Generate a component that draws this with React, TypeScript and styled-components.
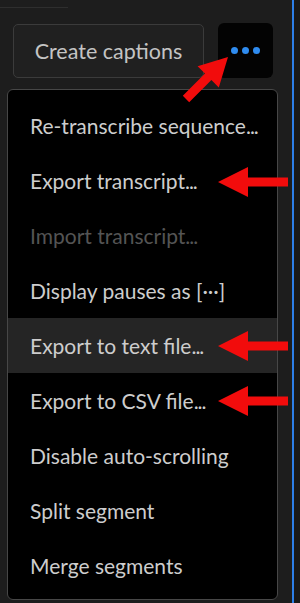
import React from "react";
import styled, { createGlobalStyle } from "styled-components";

const GlobalStyle = createGlobalStyle`
  html, body {
    margin: 0;
    padding: 0;
    background: #1d1d1d;
  }
  * { box-sizing: border-box; }
`;

const Page = styled.div`
  position: relative;
  width: 300px;
  height: 603px;
  overflow: hidden;
  display: flex;
  background: #1d1d1d;
  font-family: "Lato", "Open Sans", sans-serif;
`;

const Panel = styled.div`
  width: 294px;
  height: 100%;
  border-right: 2px solid #2d7fe8;
  display: flex;
  flex-direction: column;
`;

const Gutter = styled.div`
  flex: 1;
  background: #191919;
`;

const TopRule = styled.div`
  width: 68px;
  height: 1px;
  margin-top: 7px;
  background: #2e2e2e;
`;

const Toolbar = styled.div`
  display: flex;
  align-items: center;
  gap: 14px;
  margin-top: 15px;
  padding-left: 13px;
`;

const CaptionButton = styled.button`
  width: 191px;
  height: 54px;
  border: 1px solid #3b3b3b;
  border-radius: 5px;
  background: #202020;
  color: #c4c4c4;
  font-family: inherit;
  font-size: 21.5px;
  font-weight: 400;
  padding: 0;
  display: flex;
  align-items: center;
  justify-content: center;
`;

const MoreButton = styled.button`
  width: 55px;
  height: 55px;
  border: none;
  border-radius: 6px;
  background: #030303;
  padding: 0;
  display: flex;
  align-items: center;
  justify-content: center;
  gap: 3.7px;
`;

const Dot = styled.span`
  width: 7px;
  height: 7px;
  border-radius: 50%;
  background: #2f8cf0;
`;

const Menu = styled.div`
  margin: 11px 0 0 7px;
  width: 271px;
  border: 1px solid #474747;
  border-radius: 6px;
  background: #000;
  padding: 8px 0 6px;
  display: flex;
  flex-direction: column;
`;

const Item = styled.div<{ $disabled?: boolean; $active?: boolean }>`
  height: 55px;
  display: flex;
  align-items: center;
  padding-left: 22px;
  font-size: 21px;
  font-weight: 400;
  white-space: nowrap;
  color: ${(p) => (p.$disabled ? "#545454" : "#cdcdcd")};
  background: ${(p) => (p.$active ? "#252525" : "transparent")};
`;

const Ellipsis = styled.span`
  letter-spacing: -1px;
`;

const Overlay = styled.svg`
  position: absolute;
  inset: 0;
  pointer-events: none;
`;

const items: { label: string; dots?: boolean; disabled?: boolean; active?: boolean }[] = [
  { label: "Re-transcribe sequence", dots: true },
  { label: "Export transcript", dots: true },
  { label: "Import transcript", dots: true, disabled: true },
  { label: "Display pauses as [\u00b7\u00b7\u00b7]" },
  { label: "Export to text file", dots: true, active: true },
  { label: "Export to CSV file", dots: true },
  { label: "Disable auto-scrolling" },
  { label: "Split segment" },
  { label: "Merge segments" },
];

const hArrow = (c: number) =>
  `218,${c} 248,${c - 15} 248,${c - 4.5} 288,${c - 4.5} 288,${c + 4.5} 248,${c + 4.5} 248,${c + 15}`;

export default function App() {
  return (
    <>
      <GlobalStyle />
      <Page>
        <Panel>
          <TopRule />
          <Toolbar>
            <CaptionButton>Create captions</CaptionButton>
            <MoreButton aria-label="More">
              <Dot />
              <Dot />
              <Dot />
            </MoreButton>
          </Toolbar>
          <Menu>
            {items.map((it) => (
              <Item key={it.label} $disabled={it.disabled} $active={it.active}>
                {it.label}
                {it.dots && <Ellipsis>...</Ellipsis>}
              </Item>
            ))}
          </Menu>
        </Panel>
        <Gutter />
        <Overlay width="300" height="603" viewBox="0 0 300 603">
          <g fill="#f20c0c">
            <polygon points="228,57 218.8,87.4 211.4,80 189.2,102.2 182.8,95.8 205,73.6 197.6,66.2" />
            <polygon points={hArrow(182)} />
            <polygon points={hArrow(346)} />
            <polygon points={hArrow(401)} />
          </g>
        </Overlay>
      </Page>
    </>
  );
}
